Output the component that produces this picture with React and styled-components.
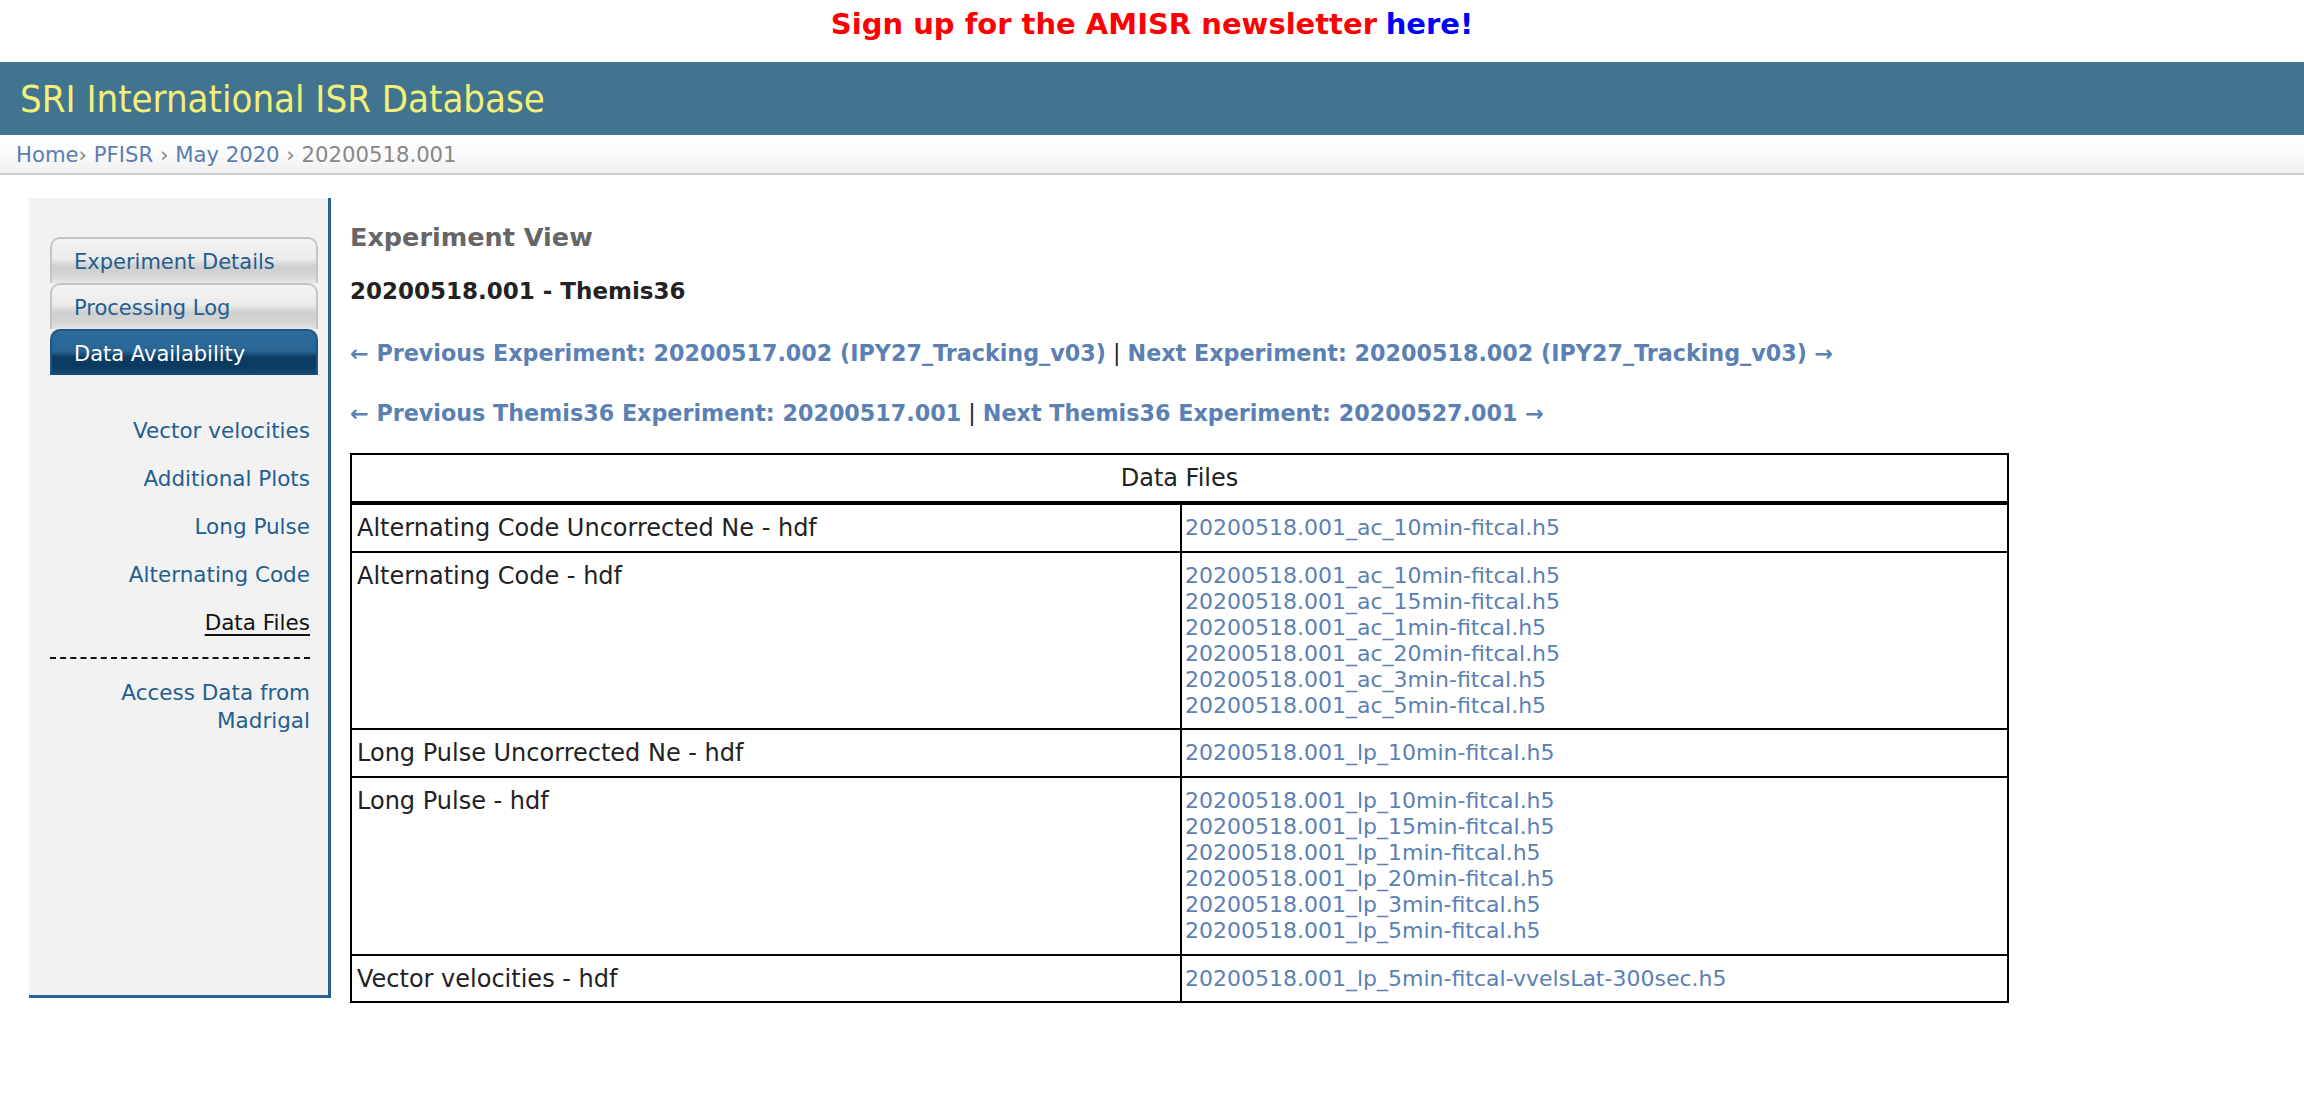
import styled, { createGlobalStyle } from 'styled-components'

const GlobalStyle = createGlobalStyle`
    body {
        margin: 0;
        background: #fff;
        font-family: "DejaVu Sans", "Liberation Sans", sans-serif;
        color: #222;
    }
`

const Banner = styled.div`
    height: 62px;
    display: flex;
    justify-content: center;
    align-items: flex-start;
    padding-top: 7px;
    box-sizing: border-box;
    font-size: 29px;
    font-weight: bold;
    color: #ff0000;
`

const BannerLink = styled.a`
    color: #0000ff;
    text-decoration: none;
    margin-left: 0.3em;
`

const Masthead = styled.div`
    height: 73px;
    background: #41758f;
    display: flex;
    align-items: center;
    padding-left: 20px;
`

const SiteTitle = styled.h1`
    margin: 0;
    font-family: "DejaVu Sans Condensed", "DejaVu Sans", sans-serif;
    font-stretch: condensed;
    font-weight: normal;
    font-size: 38px;
    color: #f3ef7a;
`

const Crumbs = styled.div`
    height: 38px;
    display: flex;
    align-items: center;
    padding-left: 16px;
    background: linear-gradient(to bottom, #ffffff 0%, #fbfbfb 50%, #f0f0f0 100%);
    border-bottom: 2px solid #cccccc;
    font-size: 21.2px;
    color: #888;
    white-space: pre;
`

const Crumb = styled.a`
    color: #5a7db3;
    text-decoration: none;
`

const Layout = styled.div`
    display: flex;
    align-items: stretch;
    gap: 19px;
    padding: 23px 0 0 29px;
`

const Sidebar = styled.nav`
    width: 302px;
    flex-shrink: 0;
    background: #f2f2f2;
    border-right: 3px solid #2a6090;
    border-bottom: 3px solid #2a6090;
    padding: 39px 10px 0 21px;
    box-sizing: border-box;
    margin-bottom: 5px;
`

const Tab = styled.a`
    display: flex;
    align-items: center;
    height: 46px;
    box-sizing: border-box;
    padding: 2px 0 0 22px;
    border: 2px solid ${p => (p.$active ? '#1f5684' : '#c4c4c4')};
    border-bottom: none;
    border-radius: 10px 10px 0 0;
    font-size: 21px;
    text-decoration: none;
    color: ${p => (p.$active ? '#ffffff' : '#245e8e')};
    background: ${p =>
        p.$active
            ? 'linear-gradient(to bottom, #2f6c9b 0%, #2a6594 45%, #0c3c63 60%, #0b3a60 80%, #184a74 100%)'
            : 'linear-gradient(to bottom, #f3f3f3 0%, #ebebeb 45%, #d0d0d0 62%, #d3d3d3 80%, #e6e6e6 100%)'};
`

const SideLinks = styled.div`
    display: flex;
    flex-direction: column;
    align-items: flex-end;
    padding: 32px 8px 0 0;
`

const SideLink = styled.a`
    font-size: 21.5px;
    line-height: 48px;
    color: ${p => (p.$current ? '#111' : '#245e8e')};
    text-decoration: ${p => (p.$current ? 'underline' : 'none')};
    text-underline-offset: 4px;
`

const Divider = styled.hr`
    align-self: stretch;
    margin: 10px 0 20px 0;
    border: none;
    border-top: 2px dashed #111;
    height: 0;
`

const Madrigal = styled.a`
    font-size: 21.5px;
    line-height: 28px;
    color: #245e8e;
    text-decoration: none;
    text-align: right;
    width: 200px;
`

const Main = styled.main`
    flex: 0 0 auto;
    width: 1659px;
`

const PageTitle = styled.h2`
    margin: 24px 0 0 0;
    font-size: 25.5px;
    line-height: 30px;
    color: #666;
`

const ExpTitle = styled.h3`
    margin: 24px 0 0 0;
    font-size: 23px;
    line-height: 30px;
    color: #222;
`

const NavLine = styled.div`
    margin-top: ${p => p.$gap}px;
    font-size: 22.25px;
    line-height: 30px;
    font-weight: bold;
    white-space: pre;
`

const NavLink = styled.a`
    color: #5b80b4;
    text-decoration: none;
`

const NavSep = styled.span`
    color: #222;
    font-weight: normal;
`

const FileTable = styled.table`
    margin-top: 25px;
    width: 100%;
    border-collapse: collapse;
    border: 2px solid #000;
    font-size: 24px;
    line-height: 26px;
`

const HeadCell = styled.th`
    font-weight: normal;
    padding: 10px 6px;
    border-bottom: 4px solid #000;
    color: #222;
`

const Cell = styled.td`
    width: ${p => p.$w || 'auto'};
    border: 2px solid #000;
    padding: 10px ${p => (p.$files ? '3px' : '5px')} 9.7px;
    vertical-align: top;
    color: #222;
`

const FileLink = styled.a`
    display: block;
    font-size: 22px;
    color: #5b80b4;
    text-decoration: none;
`

const rows = [
    { label: 'Alternating Code Uncorrected Ne - hdf', files: ['20200518.001_ac_10min-fitcal.h5'] },
    {
        label: 'Alternating Code - hdf',
        files: [
            '20200518.001_ac_10min-fitcal.h5',
            '20200518.001_ac_15min-fitcal.h5',
            '20200518.001_ac_1min-fitcal.h5',
            '20200518.001_ac_20min-fitcal.h5',
            '20200518.001_ac_3min-fitcal.h5',
            '20200518.001_ac_5min-fitcal.h5',
        ],
    },
    { label: 'Long Pulse Uncorrected Ne - hdf', files: ['20200518.001_lp_10min-fitcal.h5'] },
    {
        label: 'Long Pulse - hdf',
        files: [
            '20200518.001_lp_10min-fitcal.h5',
            '20200518.001_lp_15min-fitcal.h5',
            '20200518.001_lp_1min-fitcal.h5',
            '20200518.001_lp_20min-fitcal.h5',
            '20200518.001_lp_3min-fitcal.h5',
            '20200518.001_lp_5min-fitcal.h5',
        ],
    },
    { label: 'Vector velocities - hdf', files: ['20200518.001_lp_5min-fitcal-vvelsLat-300sec.h5'] },
]

const tabs = ['Experiment Details', 'Processing Log', 'Data Availability']
const sideLinks = ['Vector velocities', 'Additional Plots', 'Long Pulse', 'Alternating Code']

function App() {
    return (
        <>
            <GlobalStyle />
            <Banner>
                Sign up for the AMISR newsletter <BannerLink href="#">here!</BannerLink>
            </Banner>
            <Masthead>
                <SiteTitle>SRI International ISR Database</SiteTitle>
            </Masthead>
            <Crumbs>
                <Crumb href="#">Home</Crumb>› <Crumb href="#">PFISR</Crumb> › <Crumb href="#">May 2020</Crumb> › 20200518.001
            </Crumbs>

            <Layout>
                <Sidebar>
                    {tabs.map(t => (
                        <Tab key={t} href="#" $active={t === 'Data Availability'}>{t}</Tab>
                    ))}
                    <SideLinks>
                        {sideLinks.map(l => (
                            <SideLink key={l} href="#">{l}</SideLink>
                        ))}
                        <SideLink href="#" $current>Data Files</SideLink>
                        <Divider />
                        <Madrigal href="#">Access Data from Madrigal</Madrigal>
                    </SideLinks>
                </Sidebar>

                <Main>
                    <PageTitle>Experiment View</PageTitle>
                    <ExpTitle>20200518.001 - Themis36</ExpTitle>
                    <NavLine $gap={32}>
                        <NavLink href="#">← Previous Experiment: 20200517.002 (IPY27_Tracking_v03)</NavLink>
                        <NavSep> | </NavSep>
                        <NavLink href="#">Next Experiment: 20200518.002 (IPY27_Tracking_v03) →</NavLink>
                    </NavLine>
                    <NavLine $gap={30}>
                        <NavLink href="#">← Previous Themis36 Experiment: 20200517.001</NavLink>
                        <NavSep> | </NavSep>
                        <NavLink href="#">Next Themis36 Experiment: 20200527.001 →</NavLink>
                    </NavLine>

                    <FileTable>
                        <thead>
                            <tr>
                                <HeadCell colSpan={2}>Data Files</HeadCell>
                            </tr>
                        </thead>
                        <tbody>
                            {rows.map(r => (
                                <tr key={r.label}>
                                    <Cell $w="818px">{r.label}</Cell>
                                    <Cell $files>
                                        {r.files.map(f => (
                                            <FileLink key={f} href="#">{f}</FileLink>
                                        ))}
                                    </Cell>
                                </tr>
                            ))}
                        </tbody>
                    </FileTable>
                </Main>
            </Layout>
        </>
    )
}

export default App
